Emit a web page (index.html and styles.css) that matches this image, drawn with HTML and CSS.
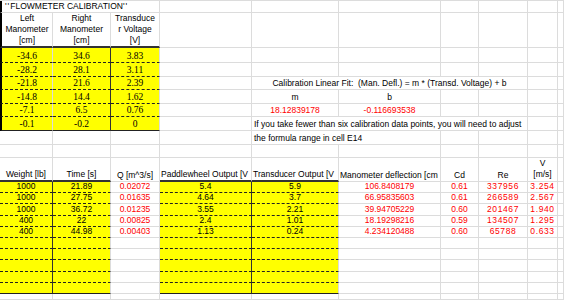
FILE: index.html
```html
<!DOCTYPE html>
<html>
<head>
<meta charset="utf-8">
<link rel="stylesheet" href="styles.css">
</head>
<body>
<div class="sheet">
  <!-- r1 -->
  <div class="c l lb span3 title"><span class="q">''</span>FLOWMETER CALIBRATION<span class="q">''</span></div>
  <div class="c"></div><div class="c"></div><div class="c"></div><div class="c"></div><div class="c"></div><div class="c"></div><div class="c"></div>
  <!-- r2 -->
  <div class="c lb hb h3"><span class="ml">Left<br>Manometer<br>[cm]</span></div>
  <div class="c hb h3"><span class="ml">Right<br>Manometer<br>[cm]</span></div>
  <div class="c hb h3"><span class="ml">Transduce<br>r Voltage<br>[V]</span></div>
  <div class="c"></div><div class="c"></div><div class="c"></div><div class="c"></div><div class="c"></div><div class="c"></div><div class="c"></div>
  <!-- r3 -->
  <div class="c lb y s d">-34.6</div><div class="c y s d vr">34.6</div><div class="c y s d">3.83</div>
  <div class="c"></div><div class="c"></div><div class="c"></div><div class="c"></div><div class="c"></div><div class="c"></div><div class="c"></div>
  <!-- r4 -->
  <div class="c lb y s d">-28.2</div><div class="c y s d vr">28.1</div><div class="c y s d">3.11</div>
  <div class="c"></div><div class="c"></div><div class="c"></div><div class="c"></div><div class="c"></div><div class="c"></div><div class="c"></div>
  <!-- r5 -->
  <div class="c lb y s d">-21.8</div><div class="c y s d vr">21.6</div><div class="c y s d">2.39</div>
  <div class="c"></div>
  <div class="c span4">Calibration Linear Fit:&nbsp; (Man. Defl.) = m * (Transd. Voltage) + b</div>
  <div class="c"></div><div class="c"></div>
  <!-- r6 -->
  <div class="c lb y s d">-14.8</div><div class="c y s d vr">14.4</div><div class="c y s d">1.62</div>
  <div class="c"></div><div class="c">m</div><div class="c">b</div><div class="c"></div><div class="c"></div><div class="c"></div><div class="c"></div>
  <!-- r7 -->
  <div class="c lb y s d">-7.1</div><div class="c y s d vr">6.5</div><div class="c y s d">0.76</div>
  <div class="c"></div><div class="c r">18.12839178</div><div class="c r">-0.116693538</div><div class="c"></div><div class="c"></div><div class="c"></div><div class="c"></div>
  <!-- r8 -->
  <div class="c lb y s bb">-0.1</div><div class="c y s bb vr">-0.2</div><div class="c y s bb">0</div>
  <div class="c"></div>
  <div class="c l span4">If you take fewer than six calibration data points, you will need to adjust</div>
  <div class="c"></div><div class="c"></div>
  <!-- r9 -->
  <div class="c"></div><div class="c"></div><div class="c"></div><div class="c"></div>
  <div class="c l span2">the formula range in cell E14</div>
  <div class="c"></div><div class="c"></div><div class="c"></div><div class="c"></div>
  <!-- r10 -->
  <div class="c"></div><div class="c"></div><div class="c"></div><div class="c"></div><div class="c"></div><div class="c"></div><div class="c"></div><div class="c"></div><div class="c"></div><div class="c"></div>
  <!-- r11 headers -->
  <div class="c hb">Weight [lb]</div>
  <div class="c hb">Time [s]</div>
  <div class="c">Q [m^3/s]</div>
  <div class="c l0 hb">Paddlewheel Output [V</div>
  <div class="c l0 hb">Transducer Output [V</div>
  <div class="c l0">Manometer deflection [cm</div>
  <div class="c">Cd</div>
  <div class="c">Re</div>
  <div class="c"><span class="ml">V<br>[m/s]</span></div>
  <div class="c"></div>
  <!-- data -->
  <div class="c y d vr">1000</div><div class="c y d">21.89</div><div class="c r">0.02072</div><div class="c y d vr">5.4</div><div class="c y d">5.9</div><div class="c r">106.8408179</div><div class="c r">0.61</div><div class="c r w">337956</div><div class="c r w">3.254</div><div class="c"></div>
  <div class="c y d vr">1000</div><div class="c y d">27.75</div><div class="c r">0.01635</div><div class="c y d vr">4.64</div><div class="c y d">3.7</div><div class="c r">66.95835603</div><div class="c r">0.61</div><div class="c r w">266589</div><div class="c r w">2.567</div><div class="c"></div>
  <div class="c y d vr">1000</div><div class="c y d">36.72</div><div class="c r">0.01235</div><div class="c y d vr">3.55</div><div class="c y d">2.21</div><div class="c r">39.94705229</div><div class="c r">0.60</div><div class="c r w">201467</div><div class="c r w">1.940</div><div class="c"></div>
  <div class="c y d vr">400</div><div class="c y d">22</div><div class="c r">0.00825</div><div class="c y d vr">2.4</div><div class="c y d">1.01</div><div class="c r">18.19298216</div><div class="c r">0.59</div><div class="c r w">134507</div><div class="c r w">1.295</div><div class="c"></div>
  <div class="c y d vr">400</div><div class="c y d">44.98</div><div class="c r">0.00403</div><div class="c y d vr">1.13</div><div class="c y d">0.24</div><div class="c r">4.234120488</div><div class="c r">0.60</div><div class="c r w">65788</div><div class="c r w">0.633</div><div class="c"></div>
  <!-- empty yellow rows -->
  <div class="c y d vr"></div><div class="c y d"></div><div class="c"></div><div class="c y d vr"></div><div class="c y d"></div><div class="c"></div><div class="c"></div><div class="c"></div><div class="c"></div><div class="c"></div>
  <div class="c y d vr"></div><div class="c y d"></div><div class="c"></div><div class="c y d vr"></div><div class="c y d"></div><div class="c"></div><div class="c"></div><div class="c"></div><div class="c"></div><div class="c"></div>
  <div class="c y d vr"></div><div class="c y d"></div><div class="c"></div><div class="c y d vr"></div><div class="c y d"></div><div class="c"></div><div class="c"></div><div class="c"></div><div class="c"></div><div class="c"></div>
  <div class="c y d vr"></div><div class="c y d"></div><div class="c"></div><div class="c y d vr"></div><div class="c y d"></div><div class="c"></div><div class="c"></div><div class="c"></div><div class="c"></div><div class="c"></div>
  <div class="c y bb vr"></div><div class="c y bb"></div><div class="c"></div><div class="c y bb vr"></div><div class="c y bb"></div><div class="c"></div><div class="c"></div><div class="c"></div><div class="c"></div><div class="c"></div>
  <!-- r22 -->
  <div class="c"></div><div class="c"></div><div class="c"></div><div class="c"></div><div class="c"></div><div class="c"></div><div class="c"></div><div class="c"></div><div class="c"></div><div class="c"></div>
</div>
</body>
</html>
```

FILE: styles.css
```css
html, body {
  margin: 0;
  padding: 0;
  background: #fff;
  overflow: hidden;
}
body {
  font-family: "Liberation Sans", Arial, sans-serif;
  font-size: 8.5px;
  color: #000;
}
.sheet {
  display: grid;
  width: 564px;
  grid-template-columns: 53px 58px 49px 92px 87px 102px 38px 49px 30px 6px;
  grid-template-rows: 12px 35px 15px 13.5px 13.5px 13.5px 13.5px 14px 14px 13px 24px repeat(10, 11.2px) 6px;
  border-top: 1px solid #dcdcdc;
}
.c {
  box-sizing: border-box;
  border-right: 1px solid #dcdcdc;
  border-bottom: 1px solid #dcdcdc;
  display: flex;
  align-items: flex-end;
  justify-content: center;
  white-space: nowrap;
  overflow: hidden;
  line-height: 10px;
  padding-bottom: 1px;
}
.l { justify-content: flex-start; padding-left: 2px; overflow: visible; }
.l0 { justify-content: flex-start; padding-left: 1px; }
.title { padding-left: 3px; }
.q { letter-spacing: 1px; }
.span2 { grid-column: span 2; }
.span3 { grid-column: span 3; }
.span4 { grid-column: span 4; }
.ml {
  display: block;
  text-align: center;
  line-height: 11px;
}
.h3 { padding-bottom: 0; }
.y { background: #ffff00; }
.s {
  font-family: "Liberation Serif", "Times New Roman", serif;
  font-size: 9.5px;
}
.r { color: #ff0000; }
.w { letter-spacing: 0.6px; }
.d { border-bottom: 1px dashed #222; }
.bb { border-bottom: 1px solid #222; }
.hb { border-bottom: 2px solid #333; }
.vr { border-right: 1px solid #333; }
.lb { border-left: 2px solid #000; }
```
